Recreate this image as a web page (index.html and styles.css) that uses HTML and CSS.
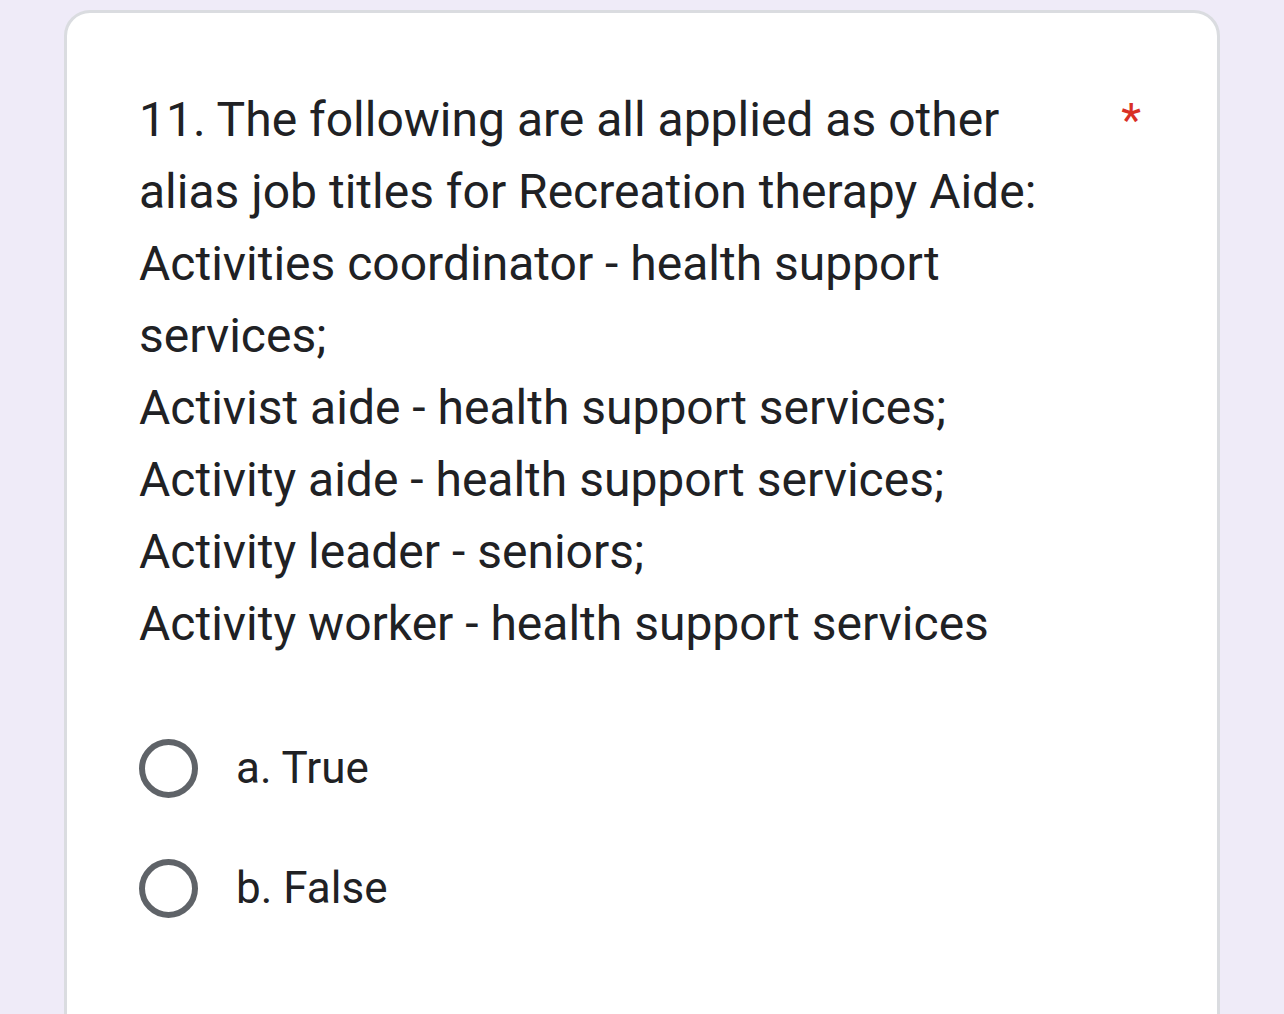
FILE: index.html
```html
<!DOCTYPE html>
<html>
<head>
<meta charset="utf-8">
<link rel="stylesheet" href="styles.css">
</head>
<body>
<div class="card">
  <div class="header">
    <div class="title">11. The following are all applied as other alias job titles for Recreation therapy Aide:<br>Activities coordinator - health support services;<br>Activist aide - health support services;<br>Activity aide - health support services;<br>Activity leader - seniors;<br>Activity worker - health support services</div>
    <span class="req">*</span>
  </div>
  <div class="options">
    <div class="option"><span class="radio"></span><span class="label">a. True</span></div>
    <div class="option"><span class="radio"></span><span class="label">b. False</span></div>
  </div>
</div>
</body>
</html>
```
FILE: styles.css
```css
html, body {
  margin: 0;
  padding: 0;
  background: #efebf8;
  height: 100%;
  overflow: hidden;
}
body {
  font-family: Roboto, "Noto Sans", sans-serif;
  color: #202124;
}
.card {
  margin: 10px 0 0 64px;
  width: 1156px;
  height: 1100px;
  box-sizing: border-box;
  background: #fff;
  border: 3px solid #dadce0;
  border-radius: 26px;
  padding: 71px 76px 0 72px;
}
.header {
  display: flex;
  align-items: flex-start;
}
.title {
  width: 930px;
  font-size: 48px;
  line-height: 72px;
}
.req {
  margin-left: auto;
  color: #d93025;
  font-size: 46px;
  line-height: 72px;
}
.options {
  margin-top: 79px;
  display: flex;
  flex-direction: column;
  gap: 61px;
}
.option {
  display: flex;
  align-items: center;
  height: 59px;
}
.radio {
  width: 47px;
  height: 47px;
  border: 6px solid #5f6368;
  border-radius: 50%;
  flex: none;
}
.label {
  margin-left: 38px;
  font-size: 44px;
  line-height: 59px;
}
```
